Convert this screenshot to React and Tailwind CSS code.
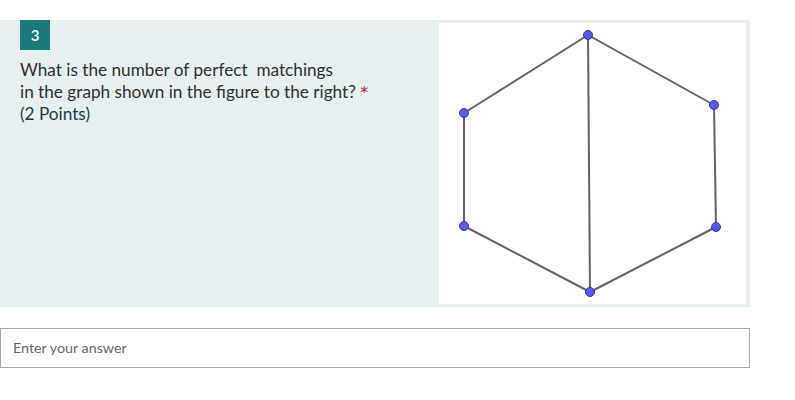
import React from "react";

// vertex coordinates inside the figure box
const nodes = [
  [150, 13],
  [26, 91],
  [26, 204],
  [152, 270],
  [278, 205],
  [276, 83],
];

const edges = [
  [0, 1],
  [1, 2],
  [2, 3],
  [3, 4],
  [4, 5],
  [5, 0],
  [0, 3],
];

const GraphFigure = () => (
  <div className="w-[309px] h-[283px] bg-white border border-[#eef2f2]">
    <svg width="307" height="281" viewBox="1 1 307 281">
      {edges.map(([a, b], i) => (
        <line
          key={i}
          x1={nodes[a][0]}
          y1={nodes[a][1]}
          x2={nodes[b][0]}
          y2={nodes[b][1]}
          stroke="#626262"
          strokeWidth="2"
        />
      ))}
      {nodes.map(([x, y], i) => (
        <circle key={i} cx={x} cy={y} r="4.5" fill="#5b5be6" stroke="#34349a" strokeWidth="1" />
      ))}
    </svg>
  </div>
);

const App = () => {
  return (
    <div className="w-[795px] h-[400px] bg-white pt-[20px]" style={{ fontFamily: "Lato, 'Open Sans', sans-serif" }}>
      <div className="w-[750px] h-[287px] bg-[#e7f0f1] flex justify-between">
        <div className="pl-[20px]">
          <div className="w-[30px] h-[30px] bg-[#1b7a78] text-white text-[15px] font-semibold flex items-center justify-center">
            3
          </div>
          <div className="mt-[9px] text-[17.2px] leading-[21.5px] text-[#2f2f2f]">
            <p>What is the number of perfect&nbsp; matchings</p>
            <p>
              in the graph shown in the figure to the right?{" "}
              <span className="text-[#a4262c] text-[16px] font-['DejaVu_Sans',sans-serif]">*</span>
            </p>
            <p className="text-[#173b3b]">(2 Points)</p>
          </div>
        </div>
        <div className="pt-[2px] pr-[3px]">
          <GraphFigure />
        </div>
      </div>
      <div className="mt-[21px] w-[750px] h-[40px] border border-[#a8a8a8] bg-white flex items-center px-[12px]">
        <input
          type="text"
          placeholder="Enter your answer"
          className="w-full outline-none text-[14.3px] text-[#333] placeholder:text-[#666]"
        />
      </div>
    </div>
  );
};

export default App;
